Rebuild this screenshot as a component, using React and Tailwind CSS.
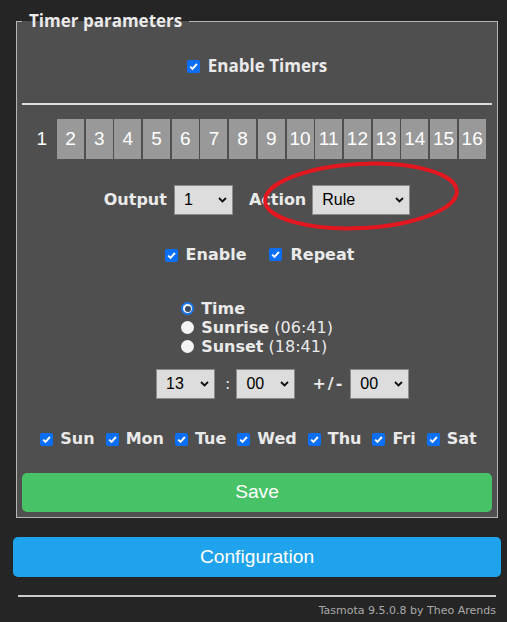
import React from "react";

const tabs = [1, 2, 3, 4, 5, 6, 7, 8, 9, 10, 11, 12, 13, 14, 15, 16];
const days = ["Sun", "Mon", "Tue", "Wed", "Thu", "Fri", "Sat"];

const Check = () => (
  <span className="inline-flex w-[13px] h-[13px] shrink-0 items-center justify-center rounded-[2px] bg-[#0b6ff5]">
    <svg width="11" height="11" viewBox="0 0 11 11">
      <path d="M2.2 5.6 L4.5 7.9 L8.9 3" stroke="#fff" strokeWidth="1.9" fill="none" />
    </svg>
  </span>
);

const Radio = ({ checked }) =>
  checked ? (
    <span className="inline-flex w-[13px] h-[13px] shrink-0 items-center justify-center rounded-full bg-[#1877f2]">
      <span className="inline-flex w-[9px] h-[9px] items-center justify-center rounded-full bg-[#f2f2f2]">
        <span className="w-[6px] h-[6px] rounded-full bg-[#3a4a60]" />
      </span>
    </span>
  ) : (
    <span className="inline-block w-[13px] h-[13px] shrink-0 rounded-full bg-[#f4f4f4]" />
  );

const Select = ({ w, value }) => (
  <div
    className={`${w} h-[30px] flex items-center justify-between bg-[#dddddd] border border-[#8c8c8c] pl-[9px] pr-[5px] text-black text-[16px] font-normal font-['Liberation_Sans',sans-serif]`}
  >
    <span>{value}</span>
    <svg width="9" height="6" viewBox="0 0 9 6">
      <path d="M1 1 L4.5 4.5 L8 1" stroke="#111" strokeWidth="1.9" fill="none" />
    </svg>
  </div>
);

export default function App() {
  return (
    <div className="relative min-h-[622px] bg-[#252525] text-[#eaeaea] font-['DejaVu_Sans',sans-serif] pt-[11px]">
      <div className="ml-[13px] w-[488px]">
        <fieldset className="mx-[3px] border border-[#b4b4b4] bg-[#4f4f4f] px-[5px] pb-[5px] min-w-0">
          <legend className="px-[7px] text-[17px] leading-[20px] font-bold font-['Open_Sans',sans-serif] text-[#eaeaea]">
            Timer parameters
          </legend>

          <div className="mt-[25px] h-[20px] flex items-center justify-center gap-[8px]">
            <Check />
            <span className="text-[17px] font-bold font-['Open_Sans',sans-serif]">Enable Timers</span>
          </div>

          <div className="mt-[27px] h-[2px] bg-[#dddddd]" />

          {/* timer tabs */}
          <div className="mt-[14px] h-[40px] flex justify-center gap-[1.7px] font-['Liberation_Sans',sans-serif] text-[19px] text-white">
            {tabs.map((t) => (
              <div
                key={t}
                className={`w-[27px] h-[40px] flex items-center justify-center ${t === 1 ? "" : "bg-[#999999]"}`}
              >
                {t}
              </div>
            ))}
          </div>

          <div className="mt-[26px] h-[30px] flex items-center justify-center text-[16px] font-bold">
            <span>Output</span>
            <div className="ml-[7px]">
              <Select w="w-[59px]" value="1" />
            </div>
            <span className="ml-[16px]">Action</span>
            <div className="ml-[6px]">
              <Select w="w-[98px]" value="Rule" />
            </div>
          </div>

          <div className="mt-[30px] h-[20px] flex items-center justify-center pl-[5px] text-[16px] font-bold">
            <Check />
            <span className="ml-[8px]">Enable</span>
            <span className="ml-[23px]">
              <Check />
            </span>
            <span className="ml-[8px]">Repeat</span>
          </div>

          <div className="mt-[34px] flex justify-center text-[16px]">
            <div className="flex flex-col">
              <div className="h-[19px] flex items-center gap-[7px]">
                <Radio checked />
                <b>Time</b>
              </div>
              <div className="h-[19px] flex items-center gap-[7px]">
                <Radio />
                <span>
                  <b>Sunrise</b> (06:41)
                </span>
              </div>
              <div className="h-[19px] flex items-center gap-[7px]">
                <Radio />
                <span>
                  <b>Sunset</b> (18:41)
                </span>
              </div>
            </div>
          </div>

          <div className="mt-[13px] h-[30px] ml-[134px] flex items-center text-[16px]">
            <Select w="w-[59px]" value="13" />
            <span className="ml-[10px] mr-[6px]">:</span>
            <Select w="w-[59px]" value="00" />
            <span className="ml-[17px] mr-[6px] font-bold tracking-[2px]">+/-</span>
            <Select w="w-[59px]" value="00" />
          </div>

          <div className="mt-[30px] h-[20px] flex items-center justify-center pl-[3px] text-[16px] font-bold">
            {days.map((d, i) => (
              <div key={d} className={`flex items-center gap-[7px] ${i ? "ml-[11px]" : ""}`}>
                <Check />
                <span>{d}</span>
              </div>
            ))}
          </div>

          <button className="mt-[24px] w-full h-[39px] rounded-[5px] bg-[#47c266] text-white text-[19.2px] font-['Liberation_Sans',sans-serif]">
            Save
          </button>
        </fieldset>

        <button className="mt-[19px] w-full h-[40px] rounded-[5px] bg-[#1fa3ec] text-white text-[19.2px] font-['Liberation_Sans',sans-serif]">
          Configuration
        </button>

        <div className="mt-[18px] mx-[5px] h-[2px] bg-[#cccccc]" />
        <div className="mt-[6px] pr-[5px] text-right text-[11px] leading-[15px] text-[#aaaaaa]">
          Tasmota 9.5.0.8 by Theo Arends
        </div>
      </div>

      {/* red annotation ellipse */}
      <svg className="absolute left-[256px] top-[156px] pointer-events-none" width="212" height="80" viewBox="0 0 212 80">
        <ellipse cx="105" cy="40" rx="96" ry="32" transform="rotate(-3 105 40)" stroke="#e3171f" strokeWidth="4" fill="none" />
      </svg>
    </div>
  );
}
